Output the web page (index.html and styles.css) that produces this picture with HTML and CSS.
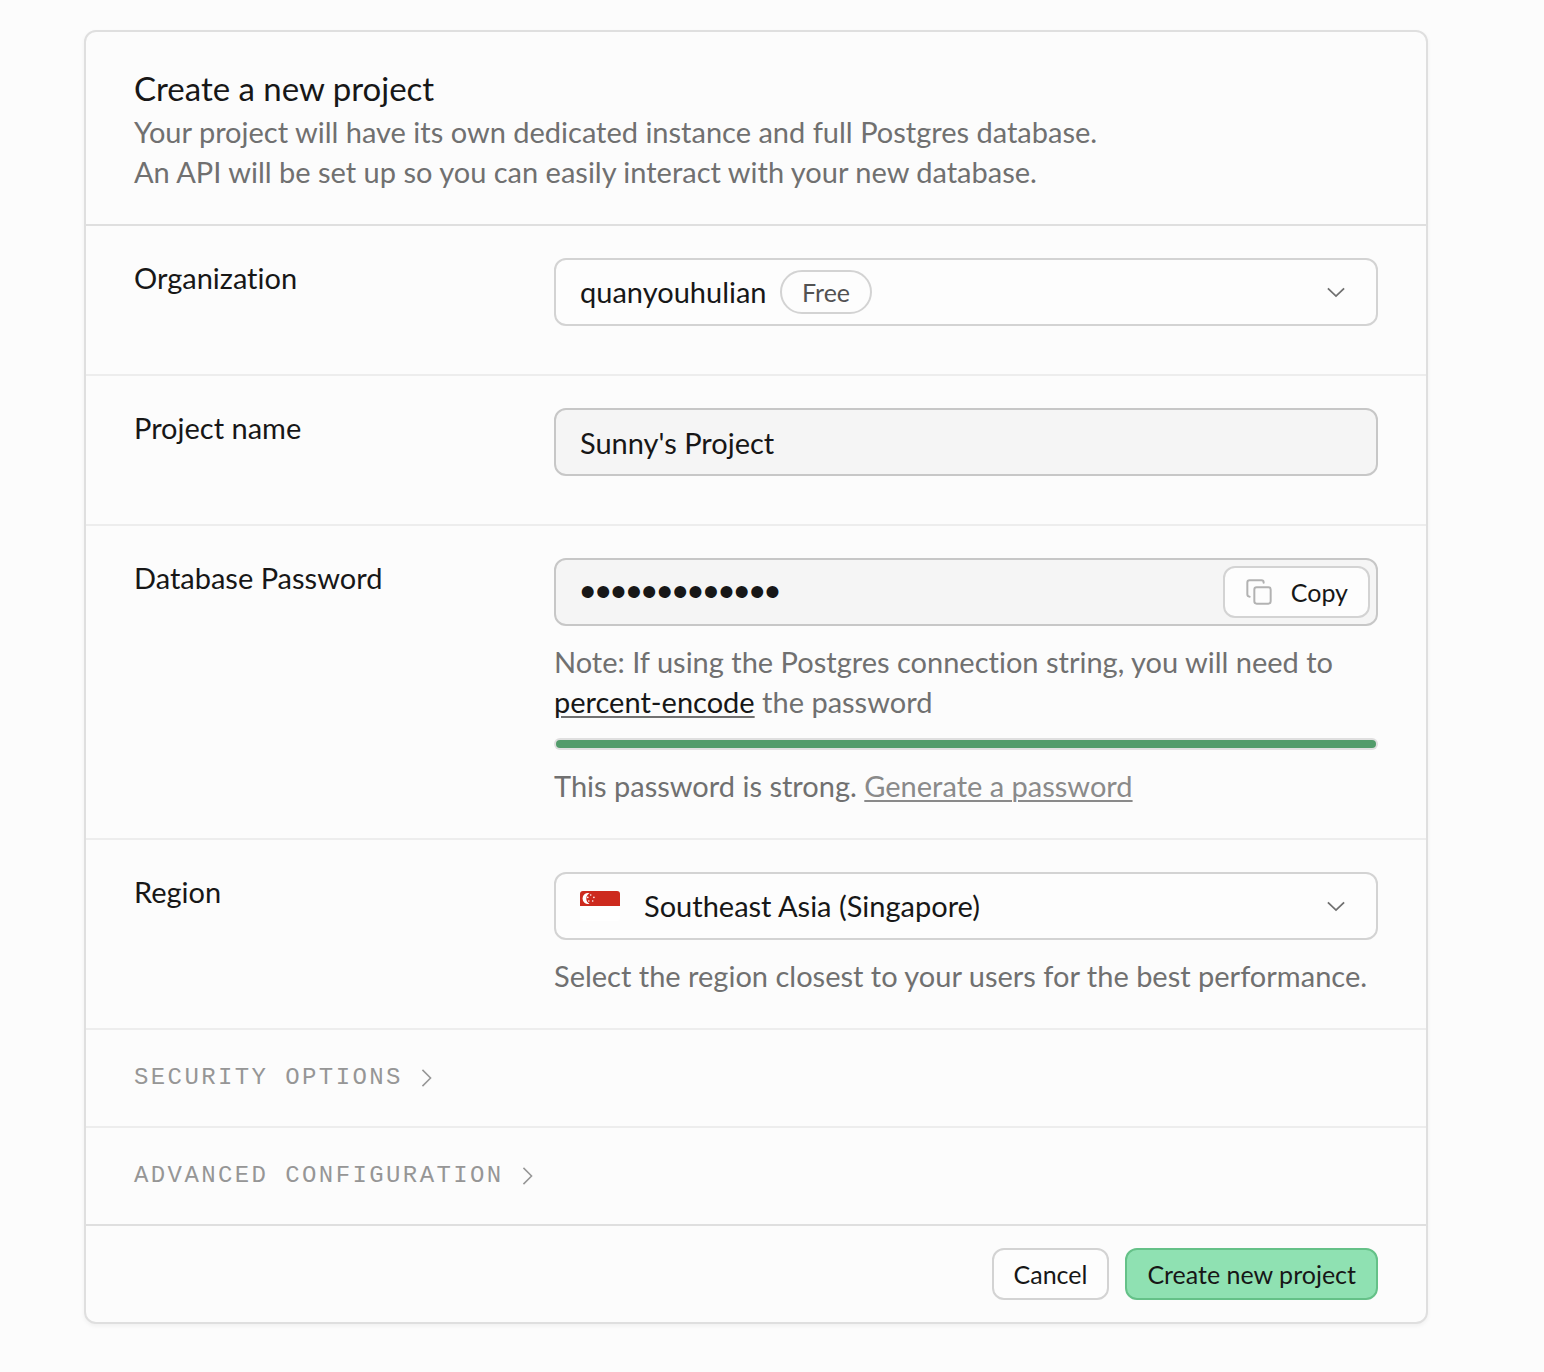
FILE: index.html
```html
<!DOCTYPE html>
<html lang="en">
<head>
	<meta charset="UTF-8">
	<meta name="viewport" content="width=device-width, initial-scale=1">
	<title>Create a new project</title>
	<link rel="stylesheet" href="styles.css">
</head>
<body>
	<form class="panel">
		<header class="panel-header">
			<h1>Create a new project</h1>
			<p>Your project will have its own dedicated instance and full Postgres database.<br>An API will be set up so you can easily interact with your new database.</p>
		</header>

		<div class="row row-tall">
			<label class="row-label" for="org">Organization</label>
			<div class="row-field">
				<div class="select">
					<select id="org">
						<option>quanyouhulian</option>
					</select>
					<span class="badge">Free</span>
					<svg class="chevron" viewBox="0 0 20 12" fill="none" stroke="currentColor" stroke-width="2"><path d="M1 1.5l9 8.5 9-8.5"/></svg>
				</div>
			</div>
		</div>

		<div class="row row-tall">
			<label class="row-label" for="name">Project name</label>
			<div class="row-field">
				<input class="input" id="name" type="text" value="Sunny's Project">
			</div>
		</div>

		<div class="row">
			<label class="row-label" for="password">Database Password</label>
			<div class="row-field">
				<div class="input password">
					<input id="password" type="password" value="Xk4pTq9vLm2Rz">
					<button class="btn" type="button">
						<svg class="copy-icon" viewBox="0 0 24 24" fill="none" stroke="currentColor" stroke-width="1.700" stroke-linecap="round" stroke-linejoin="round"><rect x="8" y="8" width="14" height="14" rx="2"/><path d="M4 16c-1.1 0-2-.9-2-2V4c0-1.1.9-2 2-2h10c1.1 0 2 .9 2 2"/></svg>
						Copy
					</button>
				</div>
				<p class="note">Note: If using the Postgres connection string, you will need to <a class="link" href="#">percent-encode</a> the password</p>
				<div class="strength"><div class="strength-bar" style="width: 100%"></div></div>
				<p class="note">This password is strong. <a class="link-light" href="#">Generate a password</a></p>
			</div>
		</div>

		<div class="row">
			<label class="row-label" for="region">Region</label>
			<div class="row-field">
				<div class="select select-flag">
					<svg class="flag" viewBox="0 0 40 30">
						<rect width="40" height="30" rx="3" fill="#fff"/>
						<path d="M3 0h34a3 3 0 0 1 3 3v12H0V3a3 3 0 0 1 3-3z" fill="#cd2a1e"/>
						<path d="M9.500 2.200a5.500 5.500 0 1 0 0 10.600a6 6 0 0 1 0-10.600z" fill="#fff"/>
						<g fill="#fff"><circle cx="10.700" cy="4" r=".8"/><circle cx="13.900" cy="6.400" r=".8"/><circle cx="12.700" cy="10" r=".8"/><circle cx="8.800" cy="10" r=".8"/><circle cx="7.800" cy="6.400" r=".8"/></g>
					</svg>
					<select id="region">
						<option>Southeast Asia (Singapore)</option>
					</select>
					<svg class="chevron" viewBox="0 0 20 12" fill="none" stroke="currentColor" stroke-width="2"><path d="M1 1.5l9 8.5 9-8.5"/></svg>
				</div>
				<p class="note">Select the region closest to your users for the best performance.</p>
			</div>
		</div>

		<button class="collapse" type="button">
			Security options
			<svg class="arrow" viewBox="0 0 12 20" fill="none" stroke="currentColor" stroke-width="1.700"><path d="M1.500 1l9 9-9 9"/></svg>
		</button>
		<button class="collapse" type="button">
			Advanced configuration
			<svg class="arrow" viewBox="0 0 12 20" fill="none" stroke="currentColor" stroke-width="1.700"><path d="M1.500 1l9 9-9 9"/></svg>
		</button>

		<footer class="panel-footer">
			<button class="btn" type="button">Cancel</button>
			<button class="btn btn-primary" type="submit">Create new project</button>
		</footer>
	</form>
</body>
</html>
```
FILE: styles.css
```css
* { margin: 0; padding: 0; box-sizing: border-box; }
body { padding: 30px 116px 48px 84px; background: #fcfcfc; color: #171717; font: 29px/40px Lato, "Liberation Sans", sans-serif; font-variant-ligatures: none; }
input, select, button { font: inherit; color: inherit; background: none; border: 0; outline: none; }
button { cursor: pointer; }
svg { flex: none; }

.panel { border: 2px solid #dfdfdf; border-radius: 12px; background: #fcfcfc; box-shadow: 0 2px 4px rgba(0, 0, 0, 0.05); }
.panel-header { padding: 32px 48px; border-bottom: 2px solid #dfdfdf; }
.panel-header h1 { font-size: 33px; line-height: 48px; font-weight: 400; }
.panel-header p { color: #707070; }

.row { display: grid; grid-template-columns: repeat(12, 1fr); column-gap: 16px; padding: 32px 48px; border-bottom: 2px solid #ededed; }
.row-tall { padding-bottom: 48px; }
.row-label { grid-column: span 4; }
.row-field { grid-column: span 8; min-width: 0; }

.input { display: block; width: 100%; height: 68px; padding: 0 24px; border: 2px solid #c7c7c7; border-radius: 12px; background: #f5f5f5; }
.password { display: flex; align-items: center; gap: 16px; padding-right: 6px; }
.password input { flex: 1; min-width: 0; height: 64px; font-family: "Liberation Sans", sans-serif; font-size: 44px; }

.select { position: relative; display: flex; border: 2px solid #d3d3d3; border-radius: 12px; background: #fdfdfd; }
.select select { width: 100%; height: 64px; padding: 0 72px 0 24px; appearance: none; }
.select-flag select { padding-left: 88px; }
.badge { position: absolute; left: 224px; top: 10px; height: 44px; padding: 0 20px; border: 2px solid #d3d3d3; border-radius: 22px; font-size: 25px; color: #525252; pointer-events: none; }
.chevron { position: absolute; right: 31px; top: 27px; width: 18px; height: 11px; color: #707070; pointer-events: none; }
.flag { position: absolute; left: 24px; top: 17px; width: 40px; height: 30px; pointer-events: none; }

.note { margin-top: 16px; color: #707070; }
.link { color: #171717; text-decoration: underline #707070 2px; text-underline-offset: 3px; }
.link-light { color: #8a8a8a; text-decoration: underline 2px; text-underline-offset: 3px; }
.strength { height: 12px; margin-top: 16px; padding: 2px; border-radius: 6px; background: #dfdfdf; }
.strength-bar { height: 8px; border-radius: 4px; background: #529c6b; }

.collapse { display: flex; align-items: center; gap: 18px; width: 100%; height: 98px; padding: 0 48px; border-bottom: 2px solid #ededed; color: #969696; font-family: "Liberation Mono", monospace; font-size: 24px; letter-spacing: 0.1em; text-transform: uppercase; }
.arrow { width: 11px; height: 18px; }

.panel-footer { display: flex; justify-content: flex-end; gap: 16px; margin-top: -2px; padding: 22px 48px; border-top: 2px solid #dfdfdf; }
.btn { display: flex; align-items: center; gap: 18px; height: 52px; padding: 0 20px; border: 2px solid #d3d3d3; border-radius: 12px; background: #fdfdfd; font-size: 25px; }
.btn-primary { border-color: #65c188; background: #8fe1b2; }
.copy-icon { width: 28px; height: 28px; color: #b2b2b2; }
```
